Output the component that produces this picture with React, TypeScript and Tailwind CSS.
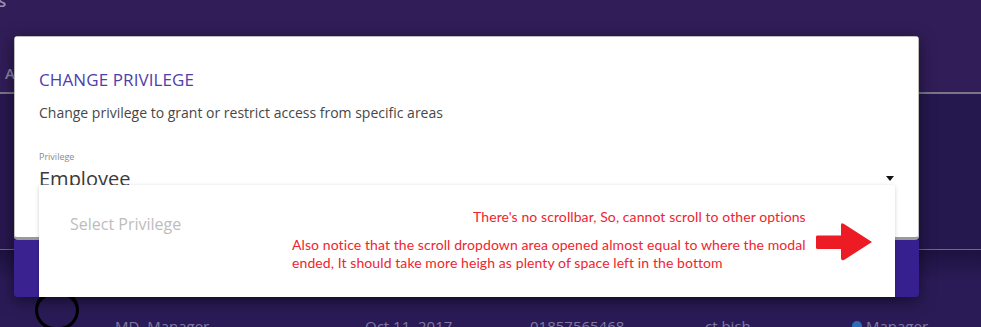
import React from "react";

const rowCells = [
  { text: "MD, Manager", w: "w-[250px]" },
  { text: "Oct 11, 2017", w: "w-[165px]" },
  { text: "01857565468", w: "w-[175px]" },
  { text: "ct bish", w: "w-[147px]" },
];

export default function App() {
  return (
    <div className="relative w-[981px] h-[327px] overflow-hidden bg-[#27184f] font-['Open_Sans',sans-serif]">
      {/* background page */}
      <div className="h-[92px] bg-[#311d58] flex flex-col justify-between pl-[5px] pb-[9px]">
        <div className="ml-[-7px] mt-[-9px] text-[17px] leading-[20px] text-[#9a8fb5] font-semibold">s</div>
        <div className="text-[15px] leading-[20px] text-[#8c84a8] font-semibold">A</div>
      </div>
      <div className="h-[2px] bg-[#7b7585]" />
      <div className="h-[155px] bg-[linear-gradient(90deg,#28174f,#23164d_60%,#25184f)]" />
      <div className="h-[1px] bg-[#6f6888]" />
      <div className="h-[77px] bg-[linear-gradient(180deg,#1d1240,#2a1b57_40%,#2a1b57)] flex items-start pl-[35px] pt-[40px]">
        <div className="w-[44px] h-[40px] rounded-full border-[3px] border-t-[5px] border-black shrink-0" />
        <div className="flex ml-[36px] mt-[26px] text-[15px] leading-[20px] text-[#7f79a0] whitespace-nowrap">
          {rowCells.map((c) => (
            <div key={c.text} className={c.w}>
              {c.text}
            </div>
          ))}
          <div className="flex items-center gap-[4px]">
            <span className="w-[10px] h-[10px] rounded-full bg-[#2f6ab8] inline-block" />
            Manager
          </div>
        </div>
      </div>

      {/* modal */}
      <div className="absolute left-[14px] top-[36px] w-[905px] h-[261px] rounded-[4px] overflow-hidden shadow-[0_4px_16px_rgba(0,0,0,0.5)] flex flex-col">
        <div className="h-[204px] bg-white rounded-b-[4px] border border-[#bdbdbd] border-b-[3px] border-b-[#9a9a9a] pl-[24px] pr-[24px] pt-[31px] flex flex-col">
          <div className="text-[17px] leading-[24px] text-[#4f3eab] tracking-[0.1px]">CHANGE PRIVILEGE</div>
          <div className="mt-[11px] text-[14px] leading-[20px] text-[#474747]">
            Change privilege to grant or restrict access from specific areas
          </div>
          <div className="mt-[28px] text-[9px] leading-[12px] text-[#8a8a8a]">Privilege</div>
          <div className="flex items-center justify-between">
            <div className="mt-[3px] text-[20px] leading-[26px] text-[#3a3a3a]">Employee</div>
            <svg width="8" height="5" viewBox="0 0 8 5" className="mt-[2px]">
              <path d="M0 0H8L4 5Z" fill="#111" />
            </svg>
          </div>
        </div>
        <div className="flex-1 bg-[linear-gradient(90deg,#3a2291,#36208f)]" />
      </div>

      {/* dropdown menu */}
      <div className="absolute left-[39px] top-[185px] w-[856px] h-[112px] bg-white shadow-[0_1px_4px_rgba(0,0,0,0.18)] rounded-tr-[3px] pl-[31px] pt-[28px]">
        <div className="text-[16px] leading-[22px] text-[#bdbdbd]">Select Privilege</div>

        {/* annotation overlay */}
        <div className="absolute left-[253px] top-[23px] flex items-start gap-[10px] font-['Lato',sans-serif] text-[14px] leading-[18px] tracking-[0.09px] text-[#f0242e]">
          <div className="flex flex-col items-end">
            <div>There's no scrollbar, So, cannot scroll to other options</div>
            <div className="mt-[10px] self-start">
              <div>Also notice that the scroll dropdown area opened almost equal to where the modal</div>
              <div>ended, It should take more heigh as plenty of space left in the bottom</div>
            </div>
          </div>
          <svg width="57" height="40" viewBox="0 0 57 40" className="mt-[14px]">
            <path d="M1 13.5Q0 13.5 0 15V25.5Q0 27 1.5 27H25V36Q25 39 28 38L56 20L28 2Q25 0 25 3V13.5Z" fill="#ed1c24" />
          </svg>
        </div>
      </div>
    </div>
  );
}
